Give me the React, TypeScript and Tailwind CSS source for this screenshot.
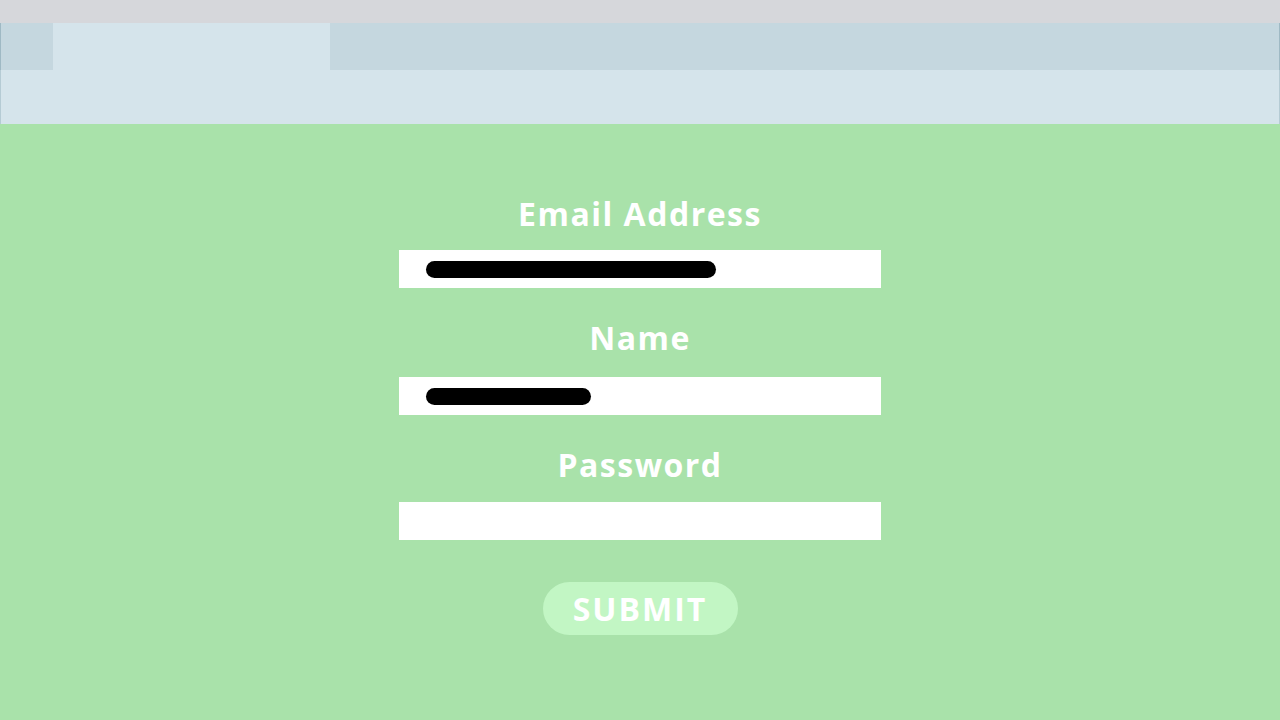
export default function App() {
  const font = { fontFamily: '"Open Sans", "Liberation Sans", sans-serif' };
  return (
    <div className="w-[1280px] h-[720px] overflow-hidden bg-[#a9e2aa] flex flex-col" style={font}>
      <div className="h-[23px] bg-[#d6d7db]" />
      <div className="h-[47px] flex bg-[#c5d7df] border-l border-r border-[#9fb9c4]">
        <div className="w-[52px]" />
        <div className="w-[277px] bg-[#d5e4eb]" />
      </div>
      <div className="h-[54px] bg-[#d5e4eb] border-l border-r border-[#b5cbd4]" />
      <div className="flex-1 flex flex-col items-center pt-[70px]">
        <div className="h-[40px] leading-[40px] text-[32px] font-bold text-white tracking-[1.5px]">Email Address</div>
        <div className="mt-[16px] w-[482px] h-[38px] bg-white flex items-center pl-[27px]">
          <div className="w-[290px] h-[17px] rounded-full bg-black" />
        </div>
        <div className="mt-[30px] h-[40px] leading-[40px] text-[32px] font-bold text-white tracking-[1.5px]">Name</div>
        <div className="mt-[19px] w-[482px] h-[38px] bg-white flex items-center pl-[27px]">
          <div className="w-[165px] h-[17px] rounded-full bg-black" />
        </div>
        <div className="mt-[30px] h-[40px] leading-[40px] text-[32px] font-bold text-white tracking-[1.5px]">Password</div>
        <div className="mt-[17px] w-[482px] h-[38px] bg-white" />
        <div className="mt-[42px] w-[195px] h-[53px] rounded-full bg-[#c2f6c4] flex items-center justify-center text-[32px] font-bold text-white tracking-[2px]">
          SUBMIT
        </div>
      </div>
    </div>
  );
}
